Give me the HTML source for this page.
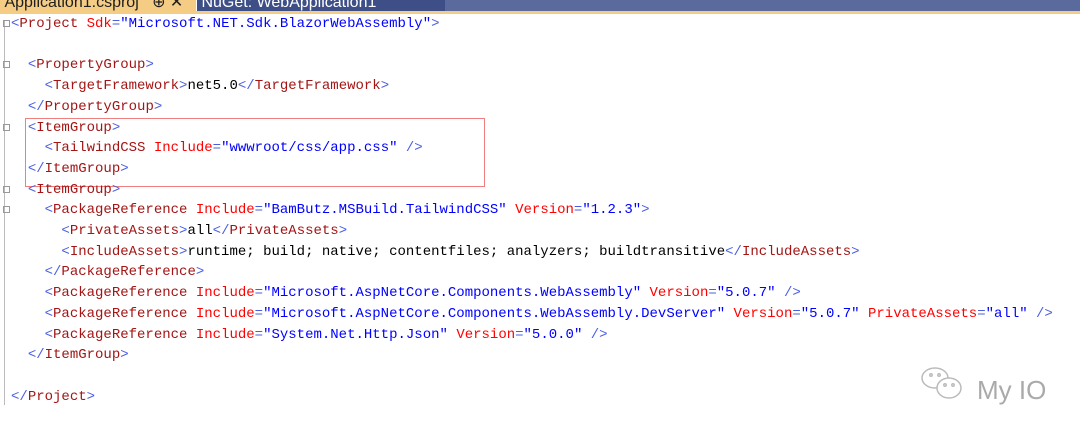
<!DOCTYPE html><html><head><style>
body{margin:0;width:1080px;height:439px;background:#fff;position:relative;overflow:hidden}
.tab1{position:absolute;left:0;top:0;width:196px;height:11px;background:#f5cc84;overflow:hidden;font:16px "Liberation Sans",sans-serif;color:#1e1e1e;line-height:6px}
.tab2{position:absolute;left:197px;top:0;width:248px;height:11px;background:#3d4f86;color:#fff;font:16px "Liberation Sans",sans-serif;line-height:6px;overflow:hidden}
.tabr{position:absolute;left:445px;top:0;right:0;height:11px;background:#5b6a9c}
.bar{position:absolute;left:0;top:11px;width:1080px;height:3px;background:#f5cc84}
.code{position:absolute;left:11px;top:14px;font:14px "Liberation Mono","Noto Sans CJK SC",monospace;line-height:20.7px;white-space:pre;color:#000}
.d{color:#4a5fe0}.t{color:#a31515}.a{color:#f00}.v{color:#0000ff}
.gut{position:absolute;left:4px;width:1px;background:#bbb}
.box{position:absolute;left:3px;width:7px;height:7px;border:1px solid #999;box-sizing:border-box}
.red{position:absolute;left:25px;top:118px;width:458px;height:67px;border:1px solid #f08080}
.logo{position:absolute;font:26px "Liberation Sans",sans-serif;color:#aaa}
</style></head><body>
<div class="tab1">&nbsp;Application1.csproj &nbsp; ⊕ ✕</div>
<div class="tab2">&nbsp;NuGet: WebApplication1</div>
<div class="tabr"></div><div class="bar"></div>
<div class="gut" style="top:20px;height:385px"></div>
<div class="box" style="top:20px"></div><div class="box" style="top:61px"></div><div class="box" style="top:124px"></div><div class="box" style="top:186px"></div><div class="box" style="top:206px"></div>
<div class="red"></div>
<div class="code"><span class="d">&lt;</span><span class="t">Project</span> <span class="a">Sdk</span><span class="d">=</span><span class="v">"Microsoft.NET.Sdk.BlazorWebAssembly"</span><span class="d">&gt;</span>

  <span class="d">&lt;</span><span class="t">PropertyGroup</span><span class="d">&gt;</span>
    <span class="d">&lt;</span><span class="t">TargetFramework</span><span class="d">&gt;</span>net5.0<span class="d">&lt;/</span><span class="t">TargetFramework</span><span class="d">&gt;</span>
  <span class="d">&lt;/</span><span class="t">PropertyGroup</span><span class="d">&gt;</span>
  <span class="d">&lt;</span><span class="t">ItemGroup</span><span class="d">&gt;</span>
    <span class="d">&lt;</span><span class="t">TailwindCSS</span> <span class="a">Include</span><span class="d">=</span><span class="v">"wwwroot/css/app.css"</span> <span class="d">/&gt;</span>
  <span class="d">&lt;/</span><span class="t">ItemGroup</span><span class="d">&gt;</span>
  <span class="d">&lt;</span><span class="t">ItemGroup</span><span class="d">&gt;</span>
    <span class="d">&lt;</span><span class="t">PackageReference</span> <span class="a">Include</span><span class="d">=</span><span class="v">"BamButz.MSBuild.TailwindCSS"</span> <span class="a">Version</span><span class="d">=</span><span class="v">"1.2.3"</span><span class="d">&gt;</span>
      <span class="d">&lt;</span><span class="t">PrivateAssets</span><span class="d">&gt;</span>all<span class="d">&lt;/</span><span class="t">PrivateAssets</span><span class="d">&gt;</span>
      <span class="d">&lt;</span><span class="t">IncludeAssets</span><span class="d">&gt;</span>runtime; build; native; contentfiles; analyzers; buildtransitive<span class="d">&lt;/</span><span class="t">IncludeAssets</span><span class="d">&gt;</span>
    <span class="d">&lt;/</span><span class="t">PackageReference</span><span class="d">&gt;</span>
    <span class="d">&lt;</span><span class="t">PackageReference</span> <span class="a">Include</span><span class="d">=</span><span class="v">"Microsoft.AspNetCore.Components.WebAssembly"</span> <span class="a">Version</span><span class="d">=</span><span class="v">"5.0.7"</span> <span class="d">/&gt;</span>
    <span class="d">&lt;</span><span class="t">PackageReference</span> <span class="a">Include</span><span class="d">=</span><span class="v">"Microsoft.AspNetCore.Components.WebAssembly.DevServer"</span> <span class="a">Version</span><span class="d">=</span><span class="v">"5.0.7"</span> <span class="a">PrivateAssets</span><span class="d">=</span><span class="v">"all"</span> <span class="d">/&gt;</span>
    <span class="d">&lt;</span><span class="t">PackageReference</span> <span class="a">Include</span><span class="d">=</span><span class="v">"System.Net.Http.Json"</span> <span class="a">Version</span><span class="d">=</span><span class="v">"5.0.0"</span> <span class="d">/&gt;</span>
  <span class="d">&lt;/</span><span class="t">ItemGroup</span><span class="d">&gt;</span>

<span class="d">&lt;/</span><span class="t">Project</span><span class="d">&gt;</span></div>
<svg style="position:absolute;left:920px;top:366px" width="72" height="44" viewBox="0 0 72 44" fill="none" stroke="#bbb" stroke-width="1.5">
<ellipse cx="15" cy="12" rx="13" ry="10"/><ellipse cx="29" cy="22" rx="12" ry="10" fill="#fff"/>
<circle cx="11" cy="9" r="1.2"/><circle cx="19" cy="9" r="1.2"/><circle cx="25" cy="19" r="1.2"/><circle cx="33" cy="19" r="1.2"/>
</svg>
<div class="logo" style="left:977px;top:375px">My IO</div>
</body></html>
